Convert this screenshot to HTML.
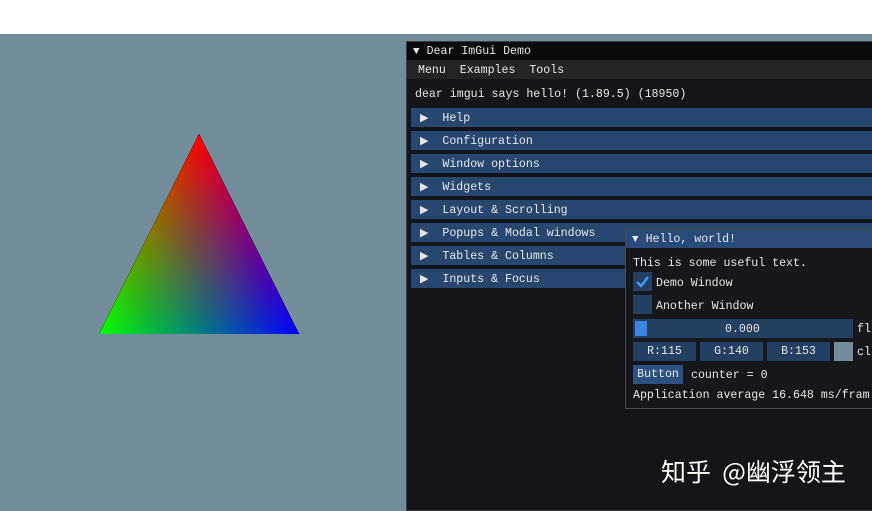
<!DOCTYPE html>
<html><head><meta charset="utf-8"><style>
*{margin:0;padding:0;box-sizing:border-box}
body{width:872px;height:507px;overflow:hidden;background:#728c99;position:relative;font-family:"Liberation Mono",monospace;font-size:11.6px;color:#e6e6e6}
.a{position:absolute;white-space:pre;line-height:19px;margin-top:1px}
#top{position:absolute;left:0;top:0;width:872px;height:34px;background:#fff}
#demo{position:absolute;left:406px;top:41px;width:470px;height:470px;background:#141518;border:1px solid #3a3a44}
.hdr{position:absolute;left:411px;width:470px;height:19px;background:#284670}
.tri{font-size:11px}
#hello{position:absolute;left:625px;top:229px;width:260px;height:180px;background:#16171a;border:1px solid #4a4a55}
.btn{position:absolute;height:19px;background:#253f62;text-align:center;line-height:20px}
</style></head><body>
<div id="top"></div>
<svg style="position:absolute;left:0;top:0" width="320" height="360">
<defs>
<linearGradient id="r" gradientUnits="userSpaceOnUse" x1="199" y1="134" x2="199" y2="334"><stop offset="0" stop-color="#f00"/><stop offset="1" stop-color="#000"/></linearGradient>
<linearGradient id="g" gradientUnits="userSpaceOnUse" x1="99" y1="334" x2="259" y2="254"><stop offset="0" stop-color="#0f0"/><stop offset="1" stop-color="#000"/></linearGradient>
<linearGradient id="b" gradientUnits="userSpaceOnUse" x1="299" y1="334" x2="139" y2="254"><stop offset="0" stop-color="#00f"/><stop offset="1" stop-color="#000"/></linearGradient>
</defs>
<g style="isolation:isolate">
<polygon points="199,134 99,334 299,334" fill="#000"/>
<polygon points="199,134 99,334 299,334" fill="url(#r)" style="mix-blend-mode:plus-lighter"/>
<polygon points="199,134 99,334 299,334" fill="url(#g)" style="mix-blend-mode:plus-lighter"/>
<polygon points="199,134 99,334 299,334" fill="url(#b)" style="mix-blend-mode:plus-lighter"/>
</g>
</svg>
<div id="demo"></div>
<div style="position:absolute;left:407px;top:42px;width:470px;height:18px;background:#0a0a0a"></div>
<div class="a" style="left:413px;top:41px"><span class="tri">▼</span> Dear ImGui Demo</div>
<div style="position:absolute;left:407px;top:60px;width:470px;height:19px;background:#242424"></div>
<div class="a" style="left:418px;top:60px">Menu  Examples  Tools</div>
<div class="a" style="left:415px;top:84px">dear imgui says hello! (1.89.5) (18950)</div>
<div class="hdr" style="top:108px"></div><div class="a" style="left:420px;top:108px"><span class="tri">▶</span>  Help</div>
<div class="hdr" style="top:131px"></div><div class="a" style="left:420px;top:131px"><span class="tri">▶</span>  Configuration</div>
<div class="hdr" style="top:154px"></div><div class="a" style="left:420px;top:154px"><span class="tri">▶</span>  Window options</div>
<div class="hdr" style="top:177px"></div><div class="a" style="left:420px;top:177px"><span class="tri">▶</span>  Widgets</div>
<div class="hdr" style="top:200px"></div><div class="a" style="left:420px;top:200px"><span class="tri">▶</span>  Layout &amp; Scrolling</div>
<div class="hdr" style="top:223px"></div><div class="a" style="left:420px;top:223px"><span class="tri">▶</span>  Popups &amp; Modal windows</div>
<div class="hdr" style="top:246px"></div><div class="a" style="left:420px;top:246px"><span class="tri">▶</span>  Tables &amp; Columns</div>
<div class="hdr" style="top:269px"></div><div class="a" style="left:420px;top:269px"><span class="tri">▶</span>  Inputs &amp; Focus</div>
<div id="hello"></div>
<div style="position:absolute;left:626px;top:230px;width:260px;height:18px;background:#294a7a"></div>
<div class="a" style="left:632px;top:229px"><span class="tri">▼</span> Hello, world!</div>
<div class="a" style="left:633px;top:253px">This is some useful text.</div>
<div style="position:absolute;left:633px;top:272px;width:19px;height:19px;background:#253f62"></div>
<svg style="position:absolute;left:633px;top:272px" width="19" height="19"><path d="M4 10 L8 14 L15 5" stroke="#4296fa" stroke-width="2.5" fill="none"/></svg>
<div class="a" style="left:656px;top:273px">Demo Window</div>
<div style="position:absolute;left:633px;top:295px;width:19px;height:19px;background:#253f62"></div>
<div class="a" style="left:656px;top:296px">Another Window</div>
<div style="position:absolute;left:633px;top:319px;width:220px;height:19px;background:#253f62"></div>
<div style="position:absolute;left:635px;top:321px;width:12px;height:15px;background:#3d85e0"></div>
<div class="a" style="left:725px;top:319px">0.000</div>
<div class="a" style="left:857px;top:319px">fl</div>
<div class="btn" style="left:633px;top:342px;width:63px">R:115</div>
<div class="btn" style="left:700px;top:342px;width:63px">G:140</div>
<div class="btn" style="left:767px;top:342px;width:63px">B:153</div>
<div style="position:absolute;left:834px;top:342px;width:19px;height:19px;background:#728c99"></div>
<div class="a" style="left:857px;top:342px">cl</div>
<div class="btn" style="left:633px;top:365px;width:50px;background:#2c5182">Button</div>
<div class="a" style="left:691px;top:365px">counter = 0</div>
<div class="a" style="left:633px;top:385px">Application average 16.648 ms/fram</div>
<div style="position:absolute;left:661px;top:455px;font-family:'Noto Sans CJK SC',sans-serif;font-size:25px;color:#fff;white-space:nowrap;line-height:32px">知乎&nbsp;&nbsp;@幽浮领主</div>
</body></html>
